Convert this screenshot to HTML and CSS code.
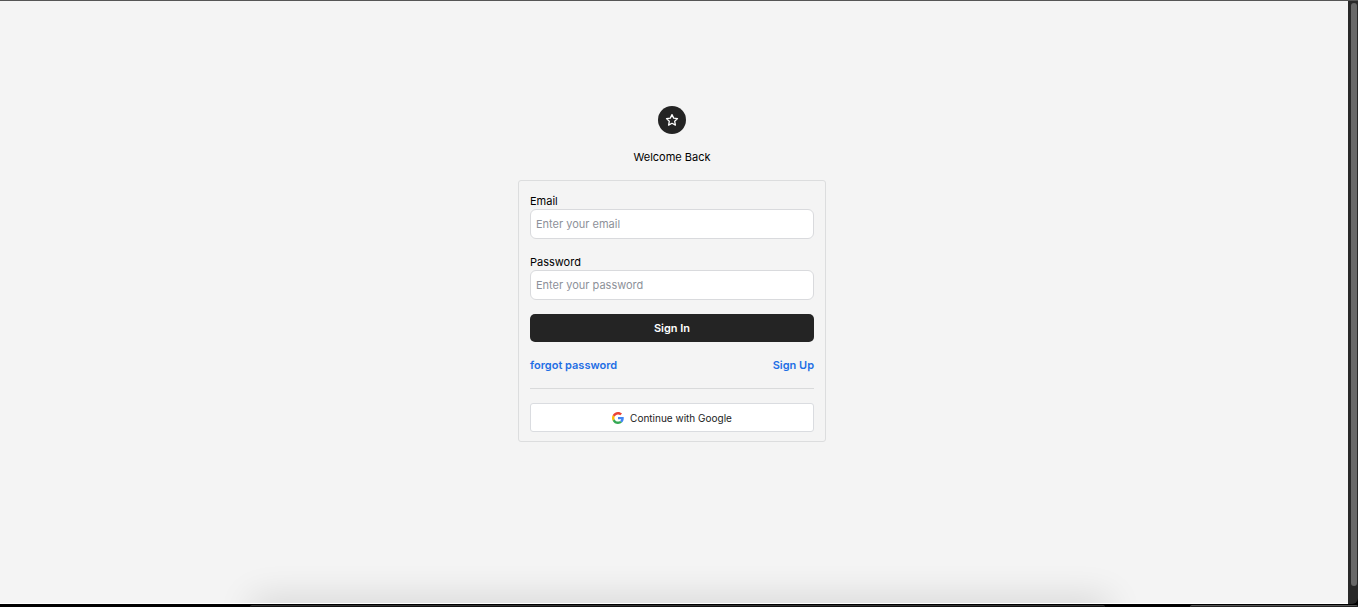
FILE: index.html
```html
<!DOCTYPE html>
<html lang="en">
<head>
<meta charset="utf-8">
<meta name="viewport" content="width=device-width, initial-scale=1">
<title>Sign In</title>
<link rel="stylesheet" href="styles.css">
</head>
<body>
<div class="window">
  <div class="viewport">
    <main class="page">
      <svg class="logo" viewBox="0 0 28 28" aria-hidden="true">
        <circle cx="14" cy="14" r="14" fill="#242424"/>
        <path d="M14 8.6l1.7 3.5 3.8.5-2.8 2.7.7 3.8-3.4-1.8-3.4 1.8.7-3.8-2.8-2.7 3.8-.5z" fill="none" stroke="#fff" stroke-width="1.3" stroke-linejoin="round"/>
      </svg>
      <h1 class="title">Welcome Back</h1>
      <form class="card">
        <div class="field">
          <label class="label" for="email">Email</label>
          <input class="input" id="email" type="email" placeholder="Enter your email">
        </div>
        <div class="field">
          <label class="label" for="password">Password</label>
          <input class="input" id="password" type="password" placeholder="Enter your password">
        </div>
        <button class="submit" type="submit">Sign In</button>
        <div class="links">
          <a class="link" href="#forgot">forgot password</a>
          <a class="link" href="#signup">Sign Up</a>
        </div>
        <hr class="divider">
        <button class="google" type="button">
          <svg class="google-icon" viewBox="0 0 48 48" aria-hidden="true">
            <path fill="#ea4335" d="M24 9.5c3.54 0 6.71 1.22 9.21 3.6l6.85-6.85C35.9 2.38 30.47 0 24 0 14.62 0 6.51 5.38 2.56 13.22l7.98 6.19C12.43 13.72 17.74 9.5 24 9.5z"/>
            <path fill="#4285f4" d="M46.98 24.55c0-1.57-.15-3.09-.38-4.55H24v9.02h12.94c-.58 2.96-2.26 5.48-4.78 7.18l7.73 6c4.51-4.18 7.09-10.36 7.09-17.65z"/>
            <path fill="#fbbc05" d="M10.53 28.59c-.48-1.45-.76-2.99-.76-4.59s.27-3.14.76-4.59l-7.98-6.19C.92 16.46 0 20.12 0 24c0 3.88.92 7.54 2.56 10.78l7.97-6.19z"/>
            <path fill="#34a853" d="M24 48c6.48 0 11.93-2.13 15.89-5.81l-7.73-6c-2.15 1.45-4.92 2.3-8.16 2.3-6.26 0-11.57-4.22-13.47-9.91l-7.98 6.19C6.51 42.62 14.62 48 24 48z"/>
          </svg>
          <span>Continue with Google</span>
        </button>
      </form>
    </main>
    <div class="scrollbar"><div class="thumb"></div></div>
  </div>
  <div class="dock"><div class="dock-panel"></div><div class="dock-corner"></div></div>
</div>
</body>
</html>
```
FILE: styles.css
```css
* {
  box-sizing: border-box;
}

body {
  margin: 0;
  background: #000;
  color: #000;
  font: 11px/16px Inter, "Liberation Sans", sans-serif;
}

.window {
  display: flex;
  flex-direction: column;
  min-height: 100vh;
  border-top: 1px solid #555;
}

.viewport {
  display: flex;
  flex: 1;
}

.page {
  position: relative;
  display: flex;
  flex: 1;
  flex-direction: column;
  align-items: center;
  overflow: hidden;
  padding: 105px 4px 24px 0;
  border-bottom: 1px solid #fff;
  background: #f4f4f4;
}

/* Soft shade cast by the panel under the page */
.page::after {
  content: "";
  position: absolute;
  top: 100%;
  right: 18%;
  left: 19%;
  height: 20px;
  box-shadow: 0 0 36px 4px rgba(0, 0, 0, 0.14);
}

.logo {
  width: 28px;
  height: 28px;
}

.title {
  margin: 15px 0;
  font-size: 11px;
  font-weight: 400;
  line-height: 16px;
}

.card {
  width: 100%;
  max-width: 308px;
  padding: 12px 11px 9px;
  border: 1px solid #dcddde;
  border-radius: 3px;
}

.field {
  display: flex;
  flex-direction: column;
  margin-bottom: 15px;
}

.field + .field {
  margin-bottom: 14px;
}

.input {
  width: 100%;
  height: 30px;
  padding: 0 5px;
  border: 1px solid #d9dadd;
  border-radius: 6px;
  background: #fff;
  color: #000;
  font: inherit;
}

.input::placeholder {
  color: #8d9199;
  opacity: 1;
}

.submit {
  display: block;
  width: 100%;
  height: 28px;
  padding: 0;
  border: 0;
  border-radius: 5px;
  background: #242424;
  color: #fff;
  font: inherit;
  font-weight: 600;
}

.links {
  display: flex;
  justify-content: space-between;
  margin: 15px 0;
}

.link {
  color: #1f6fe5;
  font-weight: 600;
  text-decoration: none;
}

.divider {
  height: 1px;
  margin: 0 0 14px;
  border: 0;
  background: #d9dadb;
}

.google {
  display: flex;
  align-items: center;
  justify-content: center;
  gap: 6px;
  width: 100%;
  height: 29px;
  padding: 0;
  border: 1px solid #dadce0;
  border-radius: 3px;
  background: #fff;
  color: #222;
  font: inherit;
  font-size: 10px;
}

.google-icon {
  width: 12px;
  height: 12px;
}

.scrollbar {
  display: flex;
  width: 10px;
  padding: 2px 1px 18px 3px;
  border-radius: 0 0 6px 0;
  background: #292929;
}

.thumb {
  flex: 1;
  border-radius: 3px;
  background: #696969;
}

.dock {
  display: flex;
  justify-content: space-between;
  height: 3px;
  padding: 1px 0 0 250px;
}

.dock-panel {
  width: 855px;
  border-top: 1px solid #333;
  border-radius: 3px 3px 0 0;
  background: #111;
}

.dock-corner {
  width: 168px;
  border-top: 1px solid #555;
  border-radius: 3px 3px 0 0;
  background: #222;
}
```
